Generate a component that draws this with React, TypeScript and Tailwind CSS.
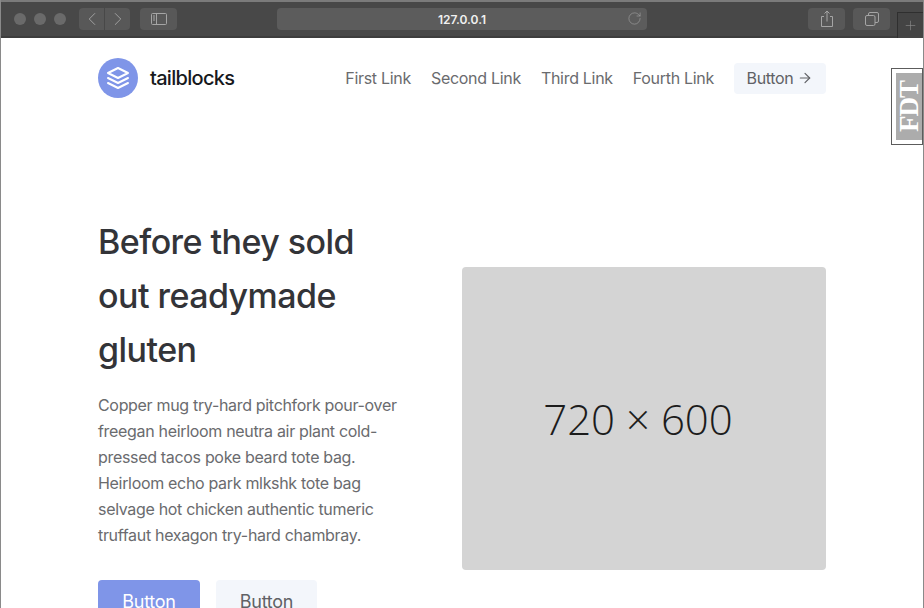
import React from 'react';
import { ChevronLeft, ChevronRight, RotateCw, Plus, ArrowRight } from 'lucide-react';

const NAV_LINKS = ['First Link', 'Second Link', 'Third Link', 'Fourth Link'];

const Toolbar: React.FC = () => (
  <div className="relative flex h-[38px] shrink-0 items-center border-t-2 border-b-2 border-t-[#7b7b7b] border-b-[#3d3d3d] bg-[#484848] pl-[13px] pr-[33px]">
    {/* Window controls */}
    <div className="flex gap-2">
      <div className="h-3 w-3 rounded-full bg-[#6a6a6a]" />
      <div className="h-3 w-3 rounded-full bg-[#6a6a6a]" />
      <div className="h-3 w-3 rounded-full bg-[#6a6a6a]" />
    </div>
    <div className="ml-[13px] flex gap-px">
      <div className="flex h-[22px] w-[25px] items-center justify-center rounded-l bg-[#585858] text-[#a5a5a5]">
        <ChevronLeft className="h-[22px] w-[22px]" strokeWidth={1} />
      </div>
      <div className="flex h-[22px] w-[25px] items-center justify-center rounded-r bg-[#585858] text-[#a5a5a5]">
        <ChevronRight className="h-[22px] w-[22px]" strokeWidth={1} />
      </div>
    </div>
    <div className="ml-[10px] flex h-[22px] w-[37px] items-center justify-center rounded bg-[#585858]">
      <svg width="16" height="12" viewBox="0 0 16 12" fill="none" stroke="#a5a5a5">
        <rect x="0.5" y="0.5" width="15" height="11" rx="1" />
        <path d="M5.5 0.5v11M2 3h2M2 5h2M2 7h2" />
      </svg>
    </div>
    {/* Address bar */}
    <div className="relative ml-[100px] flex h-[22px] w-[370px] items-center justify-center rounded bg-[#5c5c5c] pt-[2px]">
      <span className="text-[12px] font-semibold text-[#f0f0f0]">127.0.0.1</span>
      <RotateCw className="absolute right-[5px] top-[3px] h-[15px] w-[15px] text-[#a0a0a0]" strokeWidth={1} />
    </div>
    <div className="ml-auto flex gap-[8px]">
      <div className="flex h-[22px] w-[37px] items-center justify-center rounded bg-[#585858]">
        <svg width="14" height="18" viewBox="0 0 14 18" fill="none" stroke="#a5a5a5">
          <path d="M4 6.5H1.5v10h11v-10H10M7 11.5V1M4.5 3.5 7 1l2.5 2.5" />
        </svg>
      </div>
      <div className="flex h-[22px] w-[37px] items-center justify-center rounded bg-[#585858]">
        <svg width="14" height="14" viewBox="0 0 14 14" fill="none" stroke="#a5a5a5">
          <rect x="0.5" y="3.5" width="9.5" height="10" rx="1.5" />
          <path d="M3.5 3.5V2a1.5 1.5 0 0 1 1.5-1.5h7A1.5 1.5 0 0 1 13.5 2v7a1.5 1.5 0 0 1-1.5 1.5h-2" />
        </svg>
      </div>
    </div>
    {/* New tab button */}
    <div className="absolute right-0 top-[10px] flex h-[26px] w-[26px] items-center justify-center border-l border-t border-[#2f2f2f] bg-[#444444] text-[#8d8d8d]">
      <Plus className="h-[15px] w-[15px]" strokeWidth={1} />
    </div>
  </div>
);

const Header: React.FC = () => (
  <header className="flex items-center justify-between pl-[97px] pr-[97px] pt-5">
    <div className="flex items-center gap-3">
      <div className="flex h-10 w-10 items-center justify-center rounded-full bg-[#7f95e8] text-white">
        <svg width="24" height="24" viewBox="0 0 24 24" fill="none" stroke="currentColor" strokeWidth="2" strokeLinecap="round" strokeLinejoin="round">
          <path d="M12 2 2 7l10 5 10-5-10-5z" />
          <path d="m2 12 10 5 10-5" />
          <path d="m2 17 10 5 10-5" />
        </svg>
      </div>
      <span className="text-[20px] font-medium tracking-[-0.7px] text-[#17191d]">tailblocks</span>
    </div>
    <nav className="flex items-center">
      {NAV_LINKS.map((link) => (
        <a key={link} className="mr-5 text-base tracking-[-0.3px] text-[#6a6b6e]">
          {link}
        </a>
      ))}
      <button className="flex h-[31px] w-[92px] items-center justify-center gap-1 rounded bg-[#f3f6fb] text-base tracking-[-0.35px] text-[#606165]">
        Button
        <ArrowRight className="h-4 w-4" strokeWidth={1.75} />
      </button>
    </nav>
  </header>
);

const Hero: React.FC = () => (
  <section className="flex items-start justify-between pl-[97px] pr-[97px] pt-[117px]">
    <div className="w-[330px] shrink-0">
      <h1 className="whitespace-nowrap text-[34px] font-medium leading-[54px] tracking-[-0.55px] text-[#333438]">
        Before they sold
        <br />
        out readymade
        <br />
        gluten
      </h1>
      <p className="mt-[15px] whitespace-nowrap text-base leading-[26px] tracking-[-0.32px] text-[#6a6b6e]">
        Copper mug try-hard pitchfork pour-over
        <br />
        freegan heirloom neutra air plant cold-
        <br />
        pressed tacos poke beard tote bag.
        <br />
        Heirloom echo park mlkshk tote bag
        <br />
        selvage hot chicken authentic tumeric
        <br />
        truffaut hexagon try-hard chambray.
      </p>
      <div className="mt-[32px] flex gap-4">
        <button className="h-[43px] w-[102px] rounded bg-[#7f95e8] text-lg tracking-[-0.25px] text-white">Button</button>
        <button className="h-[43px] w-[101px] rounded bg-[#f3f6fb] text-lg tracking-[-0.25px] text-[#606165]">Button</button>
      </div>
    </div>
    <div className="mt-[52px] flex h-[303px] w-[364px] shrink-0 items-center justify-center rounded bg-[#d4d4d4] pr-[12px]">
      <span className="font-['Open_Sans',sans-serif] text-[42px] font-light leading-none text-[#1c1c1c]">720 × 600</span>
    </div>
  </section>
);

const App: React.FC = () => (
  <div className="relative flex h-[608px] w-[924px] flex-col overflow-hidden border-x border-[#8a8a8a] bg-white font-['Inter',sans-serif]">
    <Toolbar />
    <Header />
    <Hero />
    {/* Floating extension tab */}
    <div className="absolute right-0 top-[68px] flex h-[77px] w-[32px] items-center justify-start border border-[#5c5c5c] bg-white pl-1">
      <div className="flex h-[67px] w-[26px] items-center justify-center bg-[#acacac]">
        <span className="-rotate-90 whitespace-nowrap font-['Liberation_Serif',serif] text-[27px] font-bold leading-none tracking-[-1px] text-white">FDT</span>
      </div>
    </div>
  </div>
);

export default App;
